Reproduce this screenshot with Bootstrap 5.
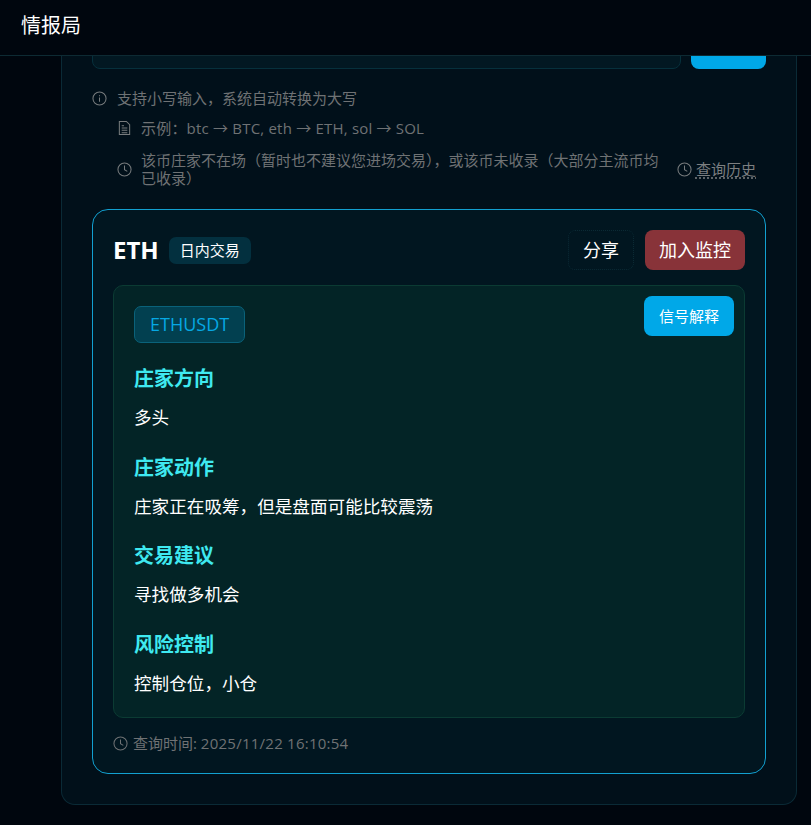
<!DOCTYPE html>
<html lang="zh">
<head>
<meta charset="utf-8">
<title>情报局</title>
<link href="https://cdn.jsdelivr.net/npm/bootstrap@5.3.0/dist/css/bootstrap.min.css" rel="stylesheet">
<style>
html,body{height:825px;overflow:hidden}
body{background:#00060e;color:#fff;font-family:"Open Sans","Noto Sans CJK SC",sans-serif;font-size:16px}
.topbar{height:56px;background:#00060e;border-bottom:1px solid #0d2a33;padding:0 21px;z-index:10}
.topbar .brand-t{font-size:20px;color:#fff;line-height:1;margin-bottom:3px}
.stage{padding:0 14px 0 61px}
.outer-panel{background:#01101a;border:1px solid #0a2a36;border-top:0;border-radius:0 0 14px 14px;height:805px;padding:29px 30px 0 30px}
.input-row{gap:10px}
.input-fake{height:40px;background:#021822;border:1px solid #06303c;border-radius:8px}
.btn-fake{width:75px;height:40px;background:#00a8e8;border:0;border-radius:8px}
.hint{color:#6f7274;font-size:15px;line-height:20px}
.hint svg{flex:none;color:#777b7d}
.hint-one{margin-top:19px;height:20px;gap:10px}
.hint-two{margin-top:10px;padding-left:25px;height:20px;gap:9px}
.hint-two .txt{letter-spacing:.2px}
.hint-three{margin-top:11px;padding-left:25px;height:40px;gap:9px;line-height:18px}
.hint-three .hist{white-space:nowrap;color:#7c7f81;text-decoration:underline dotted;text-underline-offset:3px;margin-right:10px}
.result{margin-top:20px;height:565px;background:#011620;border:1px solid #12a0d0;border-radius:16px;padding:20px}
.coin{font-size:24px;font-weight:700;line-height:1}
.tag-type{background:#03303f;font-size:15px;border-radius:7px;height:27px;padding:0 11px;margin-left:2px}
.head-actions{gap:11px}
.btn-share{height:40px;width:66px;border:1px dotted #0b2a34;border-radius:7px;color:#fff;background:transparent;font-size:18px;padding:0}
.btn-watch{height:40px;width:100px;border:0;border-radius:8px;background:#883339;color:#fff;font-size:18px;padding:0}
.signal-box{margin-top:15px;height:433px;background:#032426;border:1px solid #0b3b33;border-radius:10px;padding:20px;position:relative}
.pair{display:inline-flex;align-items:center;height:37px;padding:0 15px;background:#024050;border:1px solid #0a627a;border-radius:7px;color:#06a8e4;font-size:18px}
.btn-explain{position:absolute;top:10px;right:10px;width:90px;height:40px;background:#00a8e8;color:#fff;border:0;border-radius:8px;font-size:15px;padding:0}
.sec-h{color:#3fe9f0;font-size:20px;font-weight:700;line-height:28px;margin:0}
.sec-b{font-size:17.6px;line-height:28px;margin:0}
.sec-first{margin-top:22px}
.sec-next{margin-top:22.67px}
.sec-gap{margin-top:10px}
.stamp{margin-top:15px;color:#6f7274;font-size:15px;line-height:20px;gap:5px}
.stamp .when{letter-spacing:.25px}
</style>
</head>
<body>
<nav class="topbar fixed-top d-flex align-items-center"><span class="brand-t">情报局</span></nav>
<main class="stage">
  <section class="outer-panel">
    <div class="d-flex input-row">
      <div class="input-fake flex-grow-1"></div>
      <button class="btn-fake" type="button"></button>
    </div>
    <div class="hint hint-one d-flex align-items-center">
      <svg width="15" height="15" viewBox="0 0 16 16" fill="none" stroke="currentColor" stroke-width="1.1"><circle cx="8" cy="8" r="7"/><path d="M8 7v4.4M8 4.4v1.2"/></svg>
      <span>支持小写输入，系统自动转换为大写</span>
    </div>
    <div class="hint hint-two d-flex align-items-center">
      <svg width="15" height="16" viewBox="0 0 16 16" fill="none" stroke="currentColor" stroke-width="1.1"><path d="M2.5 1h7.5l3.5 3.5V15h-11zM5 8h6M5 10.5h6M5 13h6M5 5.5h2.5"/></svg>
      <span class="txt">示例：btc → BTC, eth → ETH, sol → SOL</span>
    </div>
    <div class="hint hint-three d-flex align-items-center">
      <svg width="15" height="15" viewBox="0 0 16 16" fill="none" stroke="currentColor" stroke-width="1.1"><circle cx="8" cy="8" r="7"/><path d="M8 3.8v4.5l3 1.7"/></svg>
      <span class="flex-grow-1">该币庄家不在场（暂时也不建议您进场交易），或该币未收录（大部分主流币均已收录）</span>
      <span class="d-inline-flex align-items-center gap-1 hist">
        <svg width="15" height="15" viewBox="0 0 16 16" fill="none" stroke="currentColor" stroke-width="1.1"><circle cx="8" cy="8" r="7"/><path d="M8 3.8v4.5l3 1.7"/></svg>
        <span>查询历史</span>
      </span>
    </div>
    <article class="result">
      <div class="d-flex align-items-center justify-content-between">
        <div class="d-flex align-items-center gap-2">
          <span class="coin">ETH</span>
          <span class="tag-type d-inline-flex align-items-center text-white">日内交易</span>
        </div>
        <div class="d-flex head-actions">
          <button class="btn-share" type="button">分享</button>
          <button class="btn-watch" type="button">加入监控</button>
        </div>
      </div>
      <div class="signal-box">
        <span class="pair">ETHUSDT</span>
        <button class="btn-explain" type="button">信号解释</button>
        <h3 class="sec-h sec-first">庄家方向</h3>
        <p class="sec-b sec-gap">多头</p>
        <h3 class="sec-h sec-next">庄家动作</h3>
        <p class="sec-b sec-gap">庄家正在吸筹，但是盘面可能比较震荡</p>
        <h3 class="sec-h sec-next">交易建议</h3>
        <p class="sec-b sec-gap">寻找做多机会</p>
        <h3 class="sec-h sec-next">风险控制</h3>
        <p class="sec-b sec-gap">控制仓位，小仓</p>
      </div>
      <div class="stamp d-flex align-items-center">
        <svg width="15" height="15" viewBox="0 0 16 16" fill="none" stroke="currentColor" stroke-width="1.1"><circle cx="8" cy="8" r="7"/><path d="M8 3.8v4.5l3 1.7"/></svg>
        <span>查询时间: <span class="when">2025/11/22 16:10:54</span></span>
      </div>
    </article>
  </section>
</main>
</body>
</html>
